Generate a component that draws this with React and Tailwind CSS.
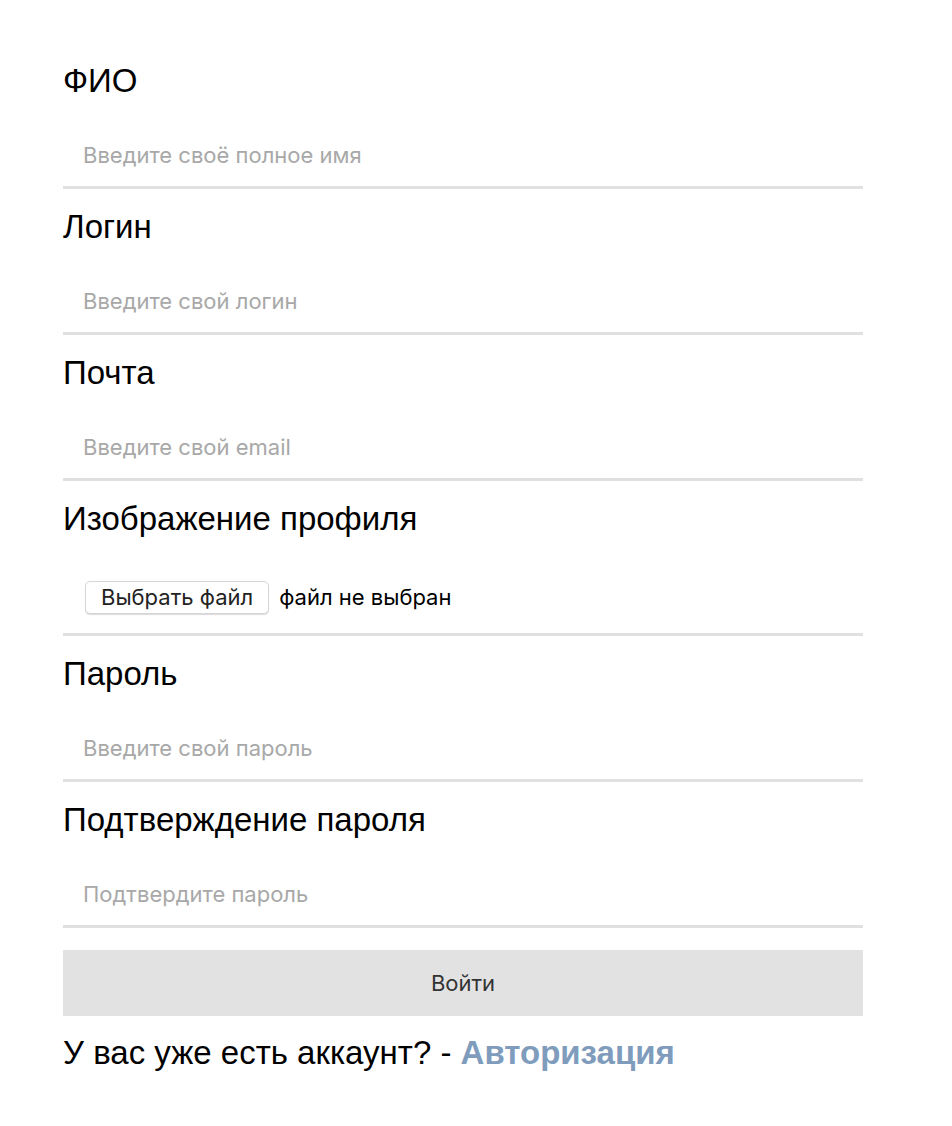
import React from 'react';

const fields = [
  { label: 'ФИО', placeholder: 'Введите своё полное имя', type: 'text' },
  { label: 'Логин', placeholder: 'Введите свой логин', type: 'text' },
  { label: 'Почта', placeholder: 'Введите свой email', type: 'email' },
  { label: 'Изображение профиля', file: true },
  { label: 'Пароль', placeholder: 'Введите свой пароль', type: 'password' },
  { label: 'Подтверждение пароля', placeholder: 'Подтвердите пароль', type: 'password' },
];

export default function App() {
  return (
    <div className="min-h-[1126px] bg-white font-['Liberation_Sans',Arial,sans-serif] text-black">
      <form className="w-[800px] ml-[63px] pt-[62px]">
        {fields.map((f, idx) => (
          <div key={idx} className={idx === 0 ? '' : 'mt-[19px]'}>
            <label className="block text-[33px] leading-[38px]">{f.label}</label>
            {f.file ? (
              <div className="mt-[23px] h-[75px] pl-[22px] flex items-center border-b-[3px] border-[#e0e0e0]">
                <button
                  type="button"
                  className="h-[33px] px-[15px] bg-white border border-[#d6d6d6] rounded-[5px] shadow-[0_1px_1px_rgba(0,0,0,0.15)] text-[22px] text-[#222] font-['Inter',sans-serif] leading-none"
                >
                  Выбрать файл
                </button>
                <span className="ml-[10px] text-[22px] font-['Inter',sans-serif]">файл не выбран</span>
              </div>
            ) : (
              <input
                type={f.type}
                placeholder={f.placeholder}
                className="mt-[23px] block w-full h-[66px] pl-[20px] text-[22px] font-['Inter',sans-serif] bg-transparent outline-none border-b-[3px] border-[#e0e0e0] placeholder:text-[#a8a8a8]"
              />
            )}
          </div>
        ))}

        <button
          type="button"
          className="mt-[22px] w-full h-[66px] bg-[#e2e2e2] text-[22px] text-[#333] font-['Inter',sans-serif]"
        >
          Войти
        </button>

        <p className="mt-[18px] text-[33px] leading-[38px]">
          У вас уже есть аккаунт? -{' '}
          <a href="#" className="font-bold text-[#7f9cbd]">Авторизация</a>
        </p>
      </form>
    </div>
  );
}
